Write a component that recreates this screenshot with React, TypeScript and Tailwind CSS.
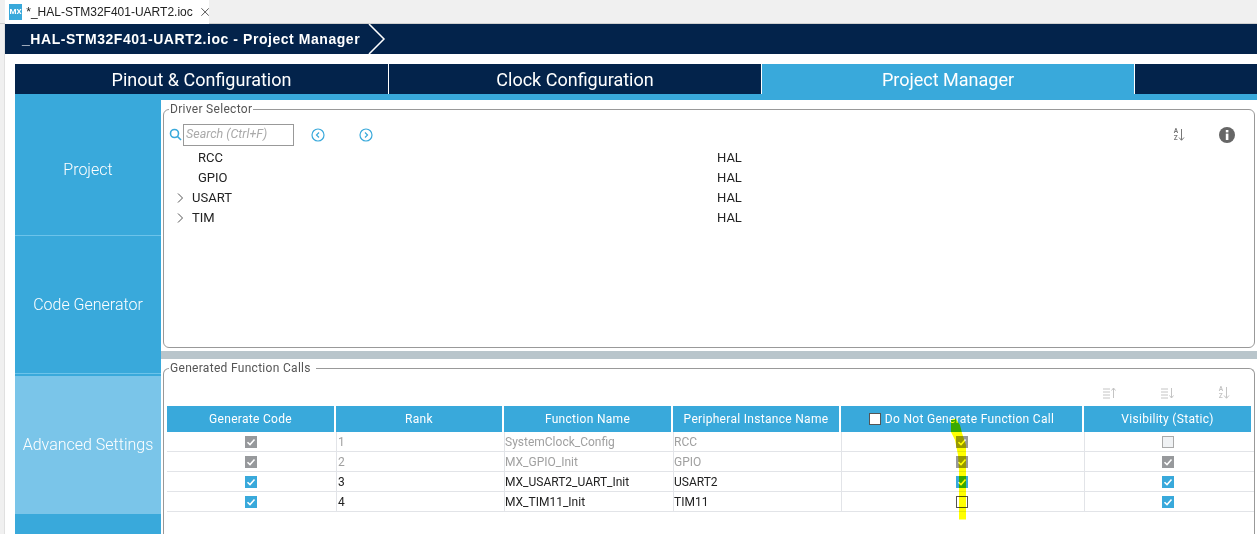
import React from "react";

const columns = "grid grid-cols-[167px_166px_167px_166px_241px_167px] gap-x-[2px]";

type Box = "gray" | "blue" | "off" | "blank";

const rows: { rank: number; fn: string; inst: string; gen: Box; dont: Box; vis: Box; dim: boolean }[] = [
  { rank: 1, fn: "SystemClock_Config", inst: "RCC", gen: "gray", dont: "gray", vis: "blank", dim: true },
  { rank: 2, fn: "MX_GPIO_Init", inst: "GPIO", gen: "gray", dont: "gray", vis: "gray", dim: true },
  { rank: 3, fn: "MX_USART2_UART_Init", inst: "USART2", gen: "blue", dont: "blue", vis: "blue", dim: false },
  { rank: 4, fn: "MX_TIM11_Init", inst: "TIM11", gen: "blue", dont: "off", vis: "blue", dim: false },
];

const drivers = [
  { name: "RCC", nested: false },
  { name: "GPIO", nested: false },
  { name: "USART", nested: true },
  { name: "TIM", nested: true },
];

const Check = ({ kind }: { kind: Box }) => {
  if (kind === "off") return <div className="h-3 w-3 border border-[#555] bg-white" />;
  if (kind === "blank") return <div className="h-3 w-3 border border-[#aaaaaa] bg-[#f0f2f4]" />;
  return (
    <div className={`flex h-3 w-3 items-center justify-center ${kind === "gray" ? "bg-[#97999c]" : "bg-[#39a9db]"}`}>
      <svg width="10" height="10" viewBox="0 0 10 10" fill="none" stroke="white" strokeWidth="1.5">
        <path d="M1.5 5.2 4 7.6 8.5 2.4" />
      </svg>
    </div>
  );
};

const SideItem = ({ label, className }: { label: string; className: string }) => (
  <div className={`flex items-center justify-center text-[16px] font-light text-white ${className}`}>{label}</div>
);

const NavArrow = ({ dir }: { dir: "left" | "right" }) => (
  <svg width="14" height="14" viewBox="0 0 14 14" fill="none" stroke="#39a9db" strokeWidth="1.2">
    <circle cx="7" cy="7" r="6" />
    <path d={dir === "left" ? "M8 4.5 5.5 7 8 9.5" : "M6 4.5 8.5 7 6 9.5"} />
  </svg>
);

// small sort button, A over Z with an arrow next to it
const SortAZ = ({ color }: { color: string }) => (
  <div className="flex items-center" style={{ color }}>
    <div className="flex flex-col text-[6.5px] leading-[6.5px] font-bold">
      <span>A</span>
      <span>Z</span>
    </div>
    <svg width="7" height="14" viewBox="0 0 7 14" fill="none" stroke="currentColor" strokeWidth="1">
      <path d="M3.5 1v11M1 9.5l2.5 2.8L6 9.5" />
    </svg>
  </div>
);

const SortLines = ({ up }: { up: boolean }) => (
  <svg width="14" height="12" viewBox="0 0 14 12" fill="none" stroke="#c4c4c4" strokeWidth="1">
    <path d="M0 2h7M0 5h7M0 8h7M0 11h7" />
    <path d={up ? "M10.5 11V1M8.5 3.5l2-2.5 2 2.5" : "M10.5 1v10M8.5 8.5l2 2.5 2-2.5"} />
  </svg>
);

const App = () => {
  return (
    <div className="relative flex h-[534px] w-[1257px] flex-col overflow-hidden bg-white font-['Roboto','Liberation_Sans',sans-serif] text-[#333]">
      {/* editor tab strip */}
      <div className="flex h-6 border-b border-[#d0d0d0] bg-[#f0f0f0] pl-[5px]">
        <div className="flex h-6 w-[204px] items-center bg-white pl-1">
          <div className="flex h-4 w-4 items-center justify-center bg-[#39a9db] text-[8px] font-bold text-white">MX</div>
          <span className="ml-[4px] font-['Liberation_Sans',sans-serif] text-[12px] whitespace-nowrap text-[#222]">*_HAL-STM32F401-UART2.ioc</span>
          <svg className="ml-[8px]" width="10" height="10" viewBox="0 0 10 10" stroke="#333" strokeWidth="1">
            <path d="M.5.5l9 9M9.5.5l-9 9" />
          </svg>
        </div>
      </div>

      <div className="flex min-h-0 flex-1">
        <div className="w-[5px] border-r border-[#e0e0e0] bg-[#f0f0f0]" />
        <div className="flex min-w-0 flex-1 flex-col">
          {/* breadcrumb */}
          <div className="flex h-[30px] items-center bg-[#03234b] pl-[17px]">
            <span className="font-['Liberation_Sans',sans-serif] text-[14px] font-bold tracking-[0.55px] whitespace-nowrap text-white">_HAL-STM32F401-UART2.ioc - Project Manager</span>
            <svg className="ml-[8px]" width="18" height="30" viewBox="0 0 18 30" fill="none" stroke="white" strokeWidth="1.5">
              <path d="M1 0l15 15L1 30" />
            </svg>
          </div>

          <div className="flex min-h-0 flex-1 flex-col pt-[10px] pl-[10px]">
            {/* main tabs */}
            <div className="flex h-[30px] bg-[#03234b] text-[18px] text-white">
              <div className="flex w-[374px] items-center justify-center border-r border-white">Pinout &amp; Configuration</div>
              <div className="flex w-[373px] items-center justify-center border-r border-white">Clock Configuration</div>
              <div className="flex w-[373px] items-center justify-center border-r border-white bg-[#39a9db]">Project Manager</div>
            </div>
            <div className="h-[6px] bg-[#39a9db]" />

            <div className="flex min-h-0 flex-1">
              {/* side menu */}
              <div className="flex w-[146px] flex-col bg-[#39a9db]">
                <SideItem label="Project" className="h-[136px] border-b border-[#6cc3ea] pt-[4px]" />
                <SideItem label="Code Generator" className="h-[138px] border-b border-[#6cc3ea]" />
                <SideItem label="Advanced Settings" className="mt-[2px] h-[138px] bg-[#7ac5e9]" />
              </div>

              <div className="flex min-w-0 flex-1 flex-col pt-[9px]">
                {/* driver selector */}
                <div className="relative mr-[2px] ml-[2px] h-[239px] rounded-[6px] border border-[#999]">
                  <div className="absolute -top-[8px] left-[5px] bg-white px-[1px] text-[12px] leading-[14px] tracking-[0.3px] text-[#555]">Driver Selector</div>
                  <div className="flex h-[24px] items-center pt-[1px] pr-[19px] pl-[5px] mt-[12px]">
                    <svg width="13" height="13" viewBox="0 0 13 13" fill="none" stroke="#39a9db" strokeWidth="1.6">
                      <circle cx="5.5" cy="5.5" r="4" />
                      <path d="M8.5 8.5l3.5 3.5" />
                    </svg>
                    <div className="ml-[1px] flex h-[22px] w-[111px] items-center border border-[#999] pl-[2px] text-[12.5px] text-[#aaa] italic">Search (Ctrl+F)</div>
                    <div className="ml-[17px]"><NavArrow dir="left" /></div>
                    <div className="ml-[34px]"><NavArrow dir="right" /></div>
                    <div className="ml-auto"><SortAZ color="#777" /></div>
                    <svg className="ml-[34px]" width="16" height="16" viewBox="0 0 16 16">
                      <circle cx="8" cy="8" r="8" fill="#666" />
                      <rect x="6.8" y="6.6" width="2.6" height="6.4" fill="white" />
                      <rect x="6.8" y="3" width="2.6" height="2.4" fill="white" />
                    </svg>
                  </div>
                  <div className="mt-[2px]">
                    {drivers.map((d) => (
                      <div key={d.name} className="flex h-5 items-center text-[13px] text-[#222]">
                        <div className="flex w-[28px] justify-center pl-[4px]">
                          {d.nested && (
                            <svg width="7" height="10" viewBox="0 0 7 10" fill="none" stroke="#555" strokeWidth="1">
                              <path d="M1 .5 5.5 5 1 9.5" />
                            </svg>
                          )}
                        </div>
                        <span className={d.nested ? "w-[525px]" : "w-[519px] pl-[0px] ml-[6px]"}>{d.name}</span>
                        <span>HAL</span>
                      </div>
                    ))}
                  </div>
                </div>

                <div className="mt-[3px] h-[8px] bg-[#b9c5cb]" />

                {/* generated function calls */}
                <div className="relative mt-[9px] mr-[2px] ml-[2px] flex-1 rounded-tl-[6px] rounded-tr-[6px] border-t border-r border-l border-[#999]">
                  <div className="absolute -top-[8px] left-[5px] bg-white pr-[5px] pl-[1px] text-[12px] leading-[14px] tracking-[0.3px] text-[#555]">Generated Function Calls</div>
                  <div className="flex h-[37px] items-center justify-end gap-[44px] pt-[10px] pr-[24px]">
                    <SortLines up />
                    <SortLines up={false} />
                    <SortAZ color="#c4c4c4" />
                  </div>
                  <div className="pl-[3px]">
                    <div className={`${columns} h-[26px] text-[12px] tracking-[0.3px] text-white`}>
                      <div className="flex items-center justify-center bg-[#39a9db]">Generate Code</div>
                      <div className="flex items-center justify-center bg-[#39a9db]">Rank</div>
                      <div className="flex items-center justify-center bg-[#39a9db]">Function Name</div>
                      <div className="flex items-center justify-center bg-[#39a9db]">Peripheral Instance Name</div>
                      <div className="flex items-center justify-center gap-[4px] bg-[#39a9db]">
                        <div className="h-3 w-3 border border-[#555] bg-white" />
                        Do Not Generate Function Call
                      </div>
                      <div className="flex items-center justify-center bg-[#39a9db]">Visibility (Static)</div>
                    </div>
                    {rows.map((r) => (
                      <div key={r.rank} className={`${columns} h-5 border-b border-[#e2e4e8] text-[12px] ${r.dim ? "text-[#a0a0a0]" : "text-[#222]"}`}>
                        <div className="flex items-center justify-center"><Check kind={r.gen} /></div>
                        <div className="flex items-center border-l border-[#e2e4e8] pl-[1px]">{r.rank}</div>
                        <div className="flex items-center border-l border-[#e2e4e8] pl-[0px] whitespace-nowrap">{r.fn}</div>
                        <div className="flex items-center border-l border-[#e2e4e8] pl-[0px]">{r.inst}</div>
                        <div className="flex items-center justify-center border-l border-[#e2e4e8]"><Check kind={r.dont} /></div>
                        <div className="flex items-center justify-center border-l border-[#e2e4e8]"><Check kind={r.vis} /></div>
                      </div>
                    ))}
                  </div>
                </div>
              </div>
            </div>
          </div>
        </div>
      </div>

      {/* yellow highlighter scribble on top of the screenshot */}
      <svg className="pointer-events-none absolute top-[417px] left-[950px] mix-blend-multiply" width="18" height="103" viewBox="950 417 18 103">
        <path d="M951 420 955.500 418.500 960 425 962 433 966 445 966 519.500 959 519.500 959 470 958 455 955 440 951 432Z" fill="#ffff00" />
      </svg>
    </div>
  );
};

export default App;
